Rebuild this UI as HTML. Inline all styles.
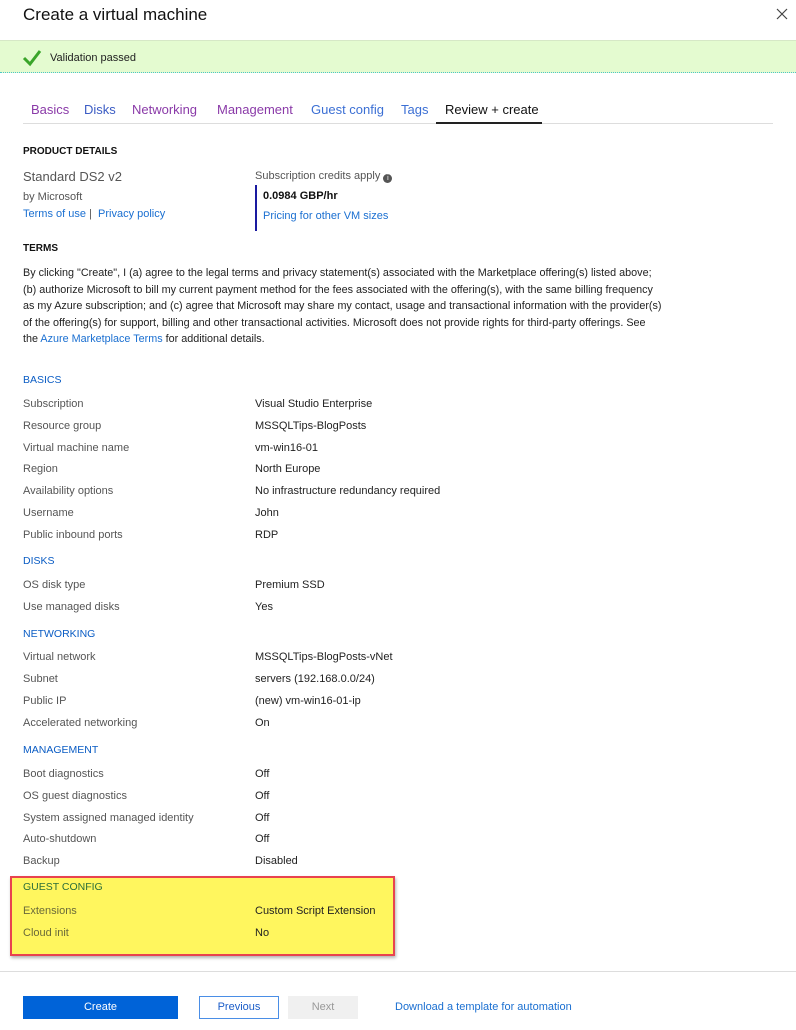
<!DOCTYPE html>
<html><head><meta charset="utf-8"><style>
*{margin:0;padding:0;box-sizing:border-box}
body{width:796px;height:1030px;background:#fff;font-family:"Liberation Sans",sans-serif;font-size:11px;color:#222;position:relative;overflow:hidden}
.a{position:absolute;white-space:nowrap;line-height:14px}
.l{color:#555}
.h{color:#0a5cc4;font-size:10.5px}
.lk{color:#1a6fd1}
.b{font-weight:bold;font-size:10px;color:#111}
</style></head><body>
<div class="a" style="left:23px;top:5px;font-size:17px;line-height:20px;color:#111">Create a virtual machine</div>
<svg class="a" style="left:776px;top:8px" width="12" height="12"><path d="M1 1L11 11M11 1L1 11" stroke="#444" stroke-width="1.2"/></svg>
<div class="a" style="left:0;top:40px;width:796px;height:33px;background:#e4fbd0;border-top:1px solid #d6e8c6;border-bottom:1px dotted #4cc6c6"></div>
<svg class="a" style="left:22px;top:49px" width="20" height="18"><path d="M2 9L8 15L18 2" stroke="#3aa52a" stroke-width="3" fill="none"/></svg>
<div class="a" style="left:50px;top:51px;color:#222">Validation passed</div>
<div class="a" style="left:31px;top:103px;font-size:13px;color:#8a3aa8">Basics</div>
<div class="a" style="left:84px;top:103px;font-size:13px;color:#3b5cc4">Disks</div>
<div class="a" style="left:132px;top:103px;font-size:13px;color:#8a3aa8">Networking</div>
<div class="a" style="left:217px;top:103px;font-size:13px;color:#8a3aa8">Management</div>
<div class="a" style="left:311px;top:103px;font-size:13px;color:#3b6fd4">Guest config</div>
<div class="a" style="left:401px;top:103px;font-size:13px;color:#3b6fd4">Tags</div>
<div class="a" style="left:445px;top:103px;font-size:13px;color:#111">Review + create</div>
<div class="a" style="left:23px;top:123px;width:750px;height:1px;background:#ddd"></div>
<div class="a" style="left:436px;top:122px;width:106px;height:2px;background:#222"></div>
<div class="a b" style="left:23px;top:145px">PRODUCT DETAILS</div>
<div class="a l" style="left:23px;top:170px;font-size:13px">Standard DS2 v2</div>
<div class="a l" style="left:23px;top:190px">by Microsoft</div>
<div class="a lk" style="left:23px;top:207px">Terms of use <span style="color:#555">|</span>&nbsp; Privacy policy</div>
<div class="a l" style="left:255px;top:169px">Subscription credits apply <span style="display:inline-block;width:9px;height:9px;border-radius:50%;background:#555;color:#fff;font-size:7px;line-height:9px;text-align:center;vertical-align:-1px">i</span></div>
<div class="a" style="left:255px;top:185px;width:2px;height:46px;background:#1a1aa0"></div>
<div class="a" style="left:263px;top:189px;font-weight:bold;color:#111">0.0984 GBP/hr</div>
<div class="a lk" style="left:263px;top:209px">Pricing for other VM sizes</div>
<div class="a b" style="left:23px;top:242px">TERMS</div>
<div class="a" style="left:23px;top:265px;line-height:16.5px;font-size:10.8px;color:#222">By clicking "Create", I (a) agree to the legal terms and privacy statement(s) associated with the Marketplace offering(s) listed above;<br>(b) authorize Microsoft to bill my current payment method for the fees associated with the offering(s), with the same billing frequency<br>as my Azure subscription; and (c) agree that Microsoft may share my contact, usage and transactional information with the provider(s)<br>of the offering(s) for support, billing and other transactional activities. Microsoft does not provide rights for third-party offerings. See<br>the <span class="lk">Azure Marketplace Terms</span> for additional details.</div>

<div class="a" style="left:10px;top:876px;width:385px;height:80px;background:#fff65e;border:2px solid #e8434f;box-shadow:1px 2px 3px rgba(0,0,0,.3)"></div>

<div class="a h" style="left:23px;top:373px">BASICS</div>
<div class="a l" style="left:23px;top:397px">Subscription</div><div class="a" style="left:255px;top:397px">Visual Studio Enterprise</div>
<div class="a l" style="left:23px;top:419px">Resource group</div><div class="a" style="left:255px;top:419px">MSSQLTips-BlogPosts</div>
<div class="a l" style="left:23px;top:441px">Virtual machine name</div><div class="a" style="left:255px;top:441px">vm-win16-01</div>
<div class="a l" style="left:23px;top:462px">Region</div><div class="a" style="left:255px;top:462px">North Europe</div>
<div class="a l" style="left:23px;top:484px">Availability options</div><div class="a" style="left:255px;top:484px">No infrastructure redundancy required</div>
<div class="a l" style="left:23px;top:506px">Username</div><div class="a" style="left:255px;top:506px">John</div>
<div class="a l" style="left:23px;top:528px">Public inbound ports</div><div class="a" style="left:255px;top:528px">RDP</div>
<div class="a h" style="left:23px;top:554px">DISKS</div>
<div class="a l" style="left:23px;top:578px">OS disk type</div><div class="a" style="left:255px;top:578px">Premium SSD</div>
<div class="a l" style="left:23px;top:600px">Use managed disks</div><div class="a" style="left:255px;top:600px">Yes</div>
<div class="a h" style="left:23px;top:627px">NETWORKING</div>
<div class="a l" style="left:23px;top:650px">Virtual network</div><div class="a" style="left:255px;top:650px">MSSQLTips-BlogPosts-vNet</div>
<div class="a l" style="left:23px;top:672px">Subnet</div><div class="a" style="left:255px;top:672px">servers (192.168.0.0/24)</div>
<div class="a l" style="left:23px;top:694px">Public IP</div><div class="a" style="left:255px;top:694px">(new) vm-win16-01-ip</div>
<div class="a l" style="left:23px;top:716px">Accelerated networking</div><div class="a" style="left:255px;top:716px">On</div>
<div class="a h" style="left:23px;top:743px">MANAGEMENT</div>
<div class="a l" style="left:23px;top:767px">Boot diagnostics</div><div class="a" style="left:255px;top:767px">Off</div>
<div class="a l" style="left:23px;top:789px">OS guest diagnostics</div><div class="a" style="left:255px;top:789px">Off</div>
<div class="a l" style="left:23px;top:811px">System assigned managed identity</div><div class="a" style="left:255px;top:811px">Off</div>
<div class="a l" style="left:23px;top:832px">Auto-shutdown</div><div class="a" style="left:255px;top:832px">Off</div>
<div class="a l" style="left:23px;top:854px">Backup</div><div class="a" style="left:255px;top:854px">Disabled</div>
<div class="a h" style="left:23px;top:880px;color:#2c6e3a">GUEST CONFIG</div>
<div class="a l" style="left:23px;top:904px;color:#6a6a3a">Extensions</div><div class="a" style="left:255px;top:904px">Custom Script Extension</div>
<div class="a l" style="left:23px;top:926px;color:#6a6a3a">Cloud init</div><div class="a" style="left:255px;top:926px">No</div>

<div class="a" style="left:0;top:971px;width:796px;height:1px;background:#ddd"></div>
<div class="a" style="left:23px;top:996px;width:155px;height:23px;background:#0063d8;color:#fff;text-align:center;line-height:23px">Create</div>
<div class="a" style="left:199px;top:996px;width:80px;height:23px;border:1px solid #4a8ee6;color:#1a5cc8;text-align:center;line-height:21px">Previous</div>
<div class="a" style="left:288px;top:996px;width:70px;height:23px;background:#f0f0f0;color:#999;text-align:center;line-height:23px">Next</div>
<div class="a lk" style="left:395px;top:1000px">Download a template for automation</div>
</body></html>
